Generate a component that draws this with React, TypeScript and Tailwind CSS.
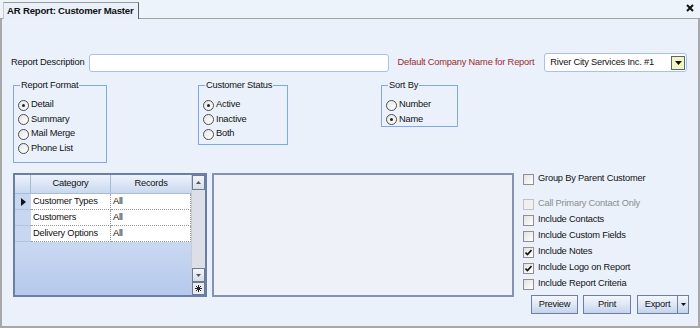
import type React from "react"

function Radio({ label, checked }: { label: string; checked?: boolean }) {
  return (
    <div className="flex items-center h-[14.5px]">
      <span className="shrink-0 w-[11px] h-[11px] rounded-full border border-[#4d4d4d] bg-gradient-to-br from-[#e6e6e6] to-white flex items-center justify-center">
        {checked && <span className="w-[3px] h-[3px] rounded-full bg-[#222]" />}
      </span>
      <span className="ml-[2px] whitespace-nowrap">{label}</span>
    </div>
  )
}

function GroupBox({ title, className, children }: { title: string; className: string; children: React.ReactNode }) {
  return (
    <fieldset className={`shrink-0 border border-[#7fa9e6] ${className}`}>
      <legend className="ml-[6px] px-[1px] leading-[10px] whitespace-nowrap">{title}</legend>
      <div className="pl-[4px] pt-[8px]">{children}</div>
    </fieldset>
  )
}

function Check({ label, checked, disabled }: { label: string; checked?: boolean; disabled?: boolean }) {
  return (
    <div className={`flex items-center h-[16px] ${disabled ? "text-[#8d8d8d]" : ""}`}>
      <span
        className={`shrink-0 w-[11px] h-[11px] border flex items-center justify-center ${
          disabled ? "border-[#c2c2c2] bg-[#f0f0f0]" : "border-[#8f8f8f] bg-gradient-to-br from-[#e2e2e2] to-white"
        }`}
      >
        {checked && (
          <svg width="7" height="7" viewBox="0 0 7 7">
            <path d="M0.5 3.5 L2.5 5.5 L6.5 1" stroke="#111" strokeWidth="1.6" fill="none" />
          </svg>
        )}
      </span>
      <span className="ml-[4px] whitespace-nowrap">{label}</span>
    </div>
  )
}

function Btn({ children, className }: { children: React.ReactNode; className: string }) {
  return (
    <div
      className={`shrink-0 h-[19px] border border-[#6f7f9f] bg-gradient-to-b from-[#f4f7fc] via-[#dfe7f5] to-[#c3d3ee] flex items-center justify-center ${className}`}
    >
      {children}
    </div>
  )
}

const rows = [
  ["Customer Types", "All"],
  ["Customers", "All"],
  ["Delivery Options", "All"],
]

export default function App() {
  return (
    <div className="w-[700px] h-[328px] bg-[#eaf1fb] text-[#111] text-[9.3px] tracking-[-0.2px] font-['Liberation_Sans',Arial,sans-serif] flex flex-col whitespace-nowrap">
      {/* Tab strip */}
      <div className="h-[19px] shrink-0 flex items-end justify-between border-b border-[#a3a3a3] pl-[3px] pr-[6px] bg-[#edf3fb]">
        <div className="h-[17px] pl-[3px] pr-[5px] border border-b-0 border-l-[#c9c9c9] border-t-[#9a9a9a] border-r-[#5f5f5f] bg-[#e9f0fa] -mb-[1px] font-bold text-[9.6px] flex items-center">
          AR Report: Customer Master
        </div>
        <svg width="8" height="8" viewBox="0 0 8 8" className="mb-[6px]">
          <path d="M1 1 L7 7 M7 1 L1 7" stroke="#111" strokeWidth="2" />
        </svg>
      </div>

      {/* Body */}
      <div className="flex-1 min-h-0 border-l-2 border-r-2 border-b-2 border-[#a8a8a8] flex flex-col">
        <div className="flex items-center mt-[34px] pl-[9px]">
          <span className="shrink-0">Report Description</span>
          <div className="shrink-0 ml-[5px] w-[300px] h-[18px] rounded-[3px] border border-[#a9c1e3] bg-white" />
          <span className="shrink-0 ml-[8px] text-[#9e2a2b]">Default Company Name for Report</span>
          <div className="shrink-0 ml-[10px] w-[143px] h-[19px] rounded-[3px] border border-[#a9c1e3] bg-white flex items-center pl-[5px] pr-[1px]">
            <span className="flex-1">River City Services Inc. #1</span>
            <div className="w-[14px] h-[14px] border border-[#56657f] bg-[#f1f7c4] flex items-center justify-center">
              <svg width="7" height="4" viewBox="0 0 7 4">
                <path d="M0 0 H7 L3.5 4 Z" fill="#111" />
              </svg>
            </div>
          </div>
        </div>

        {/* Group boxes */}
        <div className="flex items-start mt-[8px] pl-[11px]">
          <GroupBox title="Report Format" className="w-[94px] h-[83px]">
            <Radio label="Detail" checked />
            <Radio label="Summary" />
            <Radio label="Mail Merge" />
            <Radio label="Phone List" />
          </GroupBox>
          <GroupBox title="Customer Status" className="ml-[91px] w-[90px] h-[65px]">
            <Radio label="Active" checked />
            <Radio label="Inactive" />
            <Radio label="Both" />
          </GroupBox>
          <GroupBox title="Sort By" className="ml-[93px] w-[77px] h-[47px]">
            <Radio label="Number" />
            <Radio label="Name" checked />
          </GroupBox>
        </div>

        {/* Bottom area */}
        <div className="flex items-start mt-[10px] pl-[11px]">
          {/* Grid */}
          <div className="shrink-0 w-[194px] h-[124px] border-2 border-[#6a7fa6] bg-gradient-to-b from-[#e4ecf8] to-[#b5c9ec] flex">
            <div className="w-[176px] flex flex-col">
              <div className="h-[19px] flex border-b border-[#a9bad6] bg-gradient-to-b from-[#eef3fb] to-[#c9d8f0]">
                <div className="w-[16px] border-r border-[#a9bad6]" />
                <div className="w-[80px] border-r border-[#a9bad6] flex items-center justify-center">Category</div>
                <div className="flex-1 flex items-center justify-center">Records</div>
              </div>
              {rows.map(([c, r], i) => (
                <div key={c} className="h-[16px] flex">
                  <div className="w-[16px] bg-[#c8d7ef] border-b border-[#b3c3de] flex items-center justify-center">
                    {i === 0 && (
                      <svg width="5" height="8" viewBox="0 0 5 8">
                        <path d="M0 0 L5 4 L0 8 Z" fill="#111" />
                      </svg>
                    )}
                  </div>
                  <div className="w-[80px] bg-white border border-dotted border-[#9a9a9a] border-l-0 border-t-0 pl-[2px] flex items-center">
                    {c}
                  </div>
                  <div className="flex-1 bg-white border border-dotted border-[#9a9a9a] border-l-0 border-t-0 pl-[2px] flex items-center">
                    {r}
                  </div>
                </div>
              ))}
            </div>
            <div className="w-[14px] flex flex-col bg-[#dcdfe6] border-l border-[#c6ccd8]">
              <div className="h-[15px] border border-[#6c7a94] bg-gradient-to-b from-[#f3f5f9] to-[#d7dde8] flex items-center justify-center">
                <svg width="5" height="3" viewBox="0 0 5 3">
                  <path d="M0 3 L2.5 0 L5 3 Z" fill="#555" />
                </svg>
              </div>
              <div className="flex-1" />
              <div className="h-[14px] border border-[#6c7a94] bg-gradient-to-b from-[#f3f5f9] to-[#d7dde8] flex items-center justify-center">
                <svg width="5" height="3" viewBox="0 0 5 3">
                  <path d="M0 0 L5 0 L2.5 3 Z" fill="#555" />
                </svg>
              </div>
              <div className="h-[13px] border border-[#6c7a94] bg-[#e8ebf1] flex items-center justify-center">
                <svg width="7" height="7" viewBox="0 0 7 7">
                  <path d="M3.5 0 V7 M0 3.5 H7 M1 1 L6 6 M6 1 L1 6" stroke="#222" strokeWidth="1" />
                </svg>
              </div>
            </div>
          </div>

          {/* Side panel */}
          <div className="shrink-0 ml-[5px] w-[302px] h-[124px] border-2 border-[#8494b0] bg-[#eef1f7]" />

          {/* Options */}
          <div className="ml-[9px] -mt-[2px] flex flex-col">
            <Check label="Group By Parent Customer" />
            <div className="h-[9px]" />
            <Check label="Call Primary Contact Only" disabled />
            <Check label="Include Contacts" />
            <Check label="Include Custom Fields" />
            <Check label="Include Notes" checked />
            <Check label="Include Logo on Report" checked />
            <Check label="Include Report Criteria" />
            <div className="flex mt-[3px] ml-[8px]">
              <Btn className="w-[47px]">Preview</Btn>
              <Btn className="ml-[5px] w-[48px]">Print</Btn>
              <div className="ml-[6px] flex">
                <Btn className="w-[41px]">Export</Btn>
                <Btn className="w-[11px] border-l-0">
                  <svg width="5" height="3" viewBox="0 0 5 3">
                    <path d="M0 0 L5 0 L2.5 3 Z" fill="#111" />
                  </svg>
                </Btn>
              </div>
            </div>
          </div>
        </div>
      </div>
    </div>
  )
}
